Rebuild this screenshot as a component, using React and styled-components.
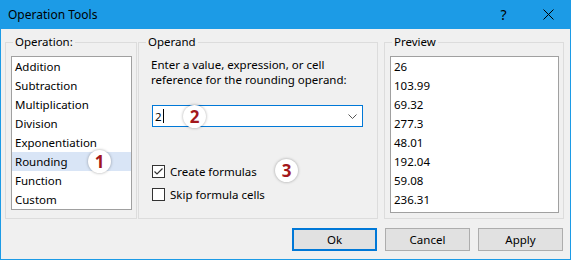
import React from 'react'
import styled, { createGlobalStyle } from 'styled-components'

const GlobalStyle = createGlobalStyle`
  html, body {
    margin: 0;
    padding: 0;
    background: #f0f0f0;
  }
  body {
    font-family: "Segoe UI", "Noto Sans", sans-serif;
    font-size: 11.5px;
    color: #000000;
  }
`

const Window = styled.div`
  width: 571px;
  height: 260px;
  box-sizing: border-box;
  border: 1px solid #1c9be6;
  border-top: none;
  background: #f0f0f0;
  display: flex;
  flex-direction: column;
`

const TitleBar = styled.div`
  height: 29px;
  flex-shrink: 0;
  background: #1c9be6;
  display: flex;
  align-items: center;
  padding-left: 8px;
  margin: 0 -1px;
  font-size: 12px;
`

const Title = styled.div`
  flex-grow: 1;
  line-height: 16px;
`

const TitleButton = styled.div`
  width: 45px;
  height: 29px;
  display: flex;
  align-items: center;
  justify-content: center;
  font-size: 14px;
`

const Body = styled.div`
  display: grid;
  grid-template-columns: 132px 240px 180px;
  grid-template-rows: 185px;
  column-gap: 1px;
  padding: 5px 7px 0 4px;
`

const Group = styled.fieldset`
  margin: 0;
  margin-left: ${p => p.$shift || 0}px;
  min-width: 0;
  border: 1px solid #dcdcdc;
  padding: 0 4px 0 5px;
  box-sizing: border-box;
  width: ${p => p.$width}px;
`

const Legend = styled.legend`
  padding: 0 2px;
  margin-left: 2px;
  line-height: 16px;
`

const ListBox = styled.div`
  margin-top: 6px;
  height: ${p => p.$height}px;
  box-sizing: border-box;
  border: 1px solid #a0a0a0;
  background: #ffffff;
`

const Row = styled.div`
  position: relative;
  height: 19px;
  line-height: 19px;
  padding-left: 3px;
  background: ${p => (p.$selected ? '#d9e5f6' : 'transparent')};
`

const Badge = styled.div`
  position: absolute;
  left: ${p => p.$left}px;
  top: ${p => p.$top}px;
  width: 23px;
  height: 23px;
  border-radius: 50%;
  background: #ffffff;
  box-shadow: 0 0 3px rgba(0, 0, 0, 0.35);
  color: #a3171b;
  font-family: "Open Sans", "Noto Sans", sans-serif;
  font-weight: 700;
  font-size: 17px;
  line-height: 23px;
  text-align: center;
`

const Prompt = styled.p`
  margin: 7px 0 0 7px;
  line-height: 15px;
`

const Combo = styled.div`
  position: relative;
  margin: 18px 0 0 8px;
  width: 211px;
  height: 22px;
  box-sizing: border-box;
  border: 1px solid #0078d7;
  background: #ffffff;
  display: flex;
  align-items: center;
  padding-left: 2px;
`

const Caret = styled.span`
  display: inline-block;
  width: 1px;
  height: 14px;
  background: #000000;
  margin-left: 1px;
`

const Chevron = styled.svg`
  position: absolute;
  right: 5px;
  top: 8px;
`

const Checks = styled.div`
  margin: 35px 0 0 8px;
  display: flex;
  flex-direction: column;
  gap: 4px;
`

const CheckRow = styled.label`
  position: relative;
  display: flex;
  align-items: center;
  height: 19px;
  gap: 5px;
`

const Box = styled.span`
  width: 13px;
  height: 13px;
  box-sizing: border-box;
  border: 1px solid #333333;
  background: #ffffff;
  display: flex;
  align-items: center;
  justify-content: center;
`

const Footer = styled.div`
  display: flex;
  justify-content: flex-end;
  gap: 8px;
  padding: 9px 7px 0 0;
`

const Button = styled.div`
  width: 85px;
  height: 23px;
  box-sizing: border-box;
  border: ${p => (p.$default ? '2px solid #0078d7' : '1px solid #adadad')};
  background: #e1e1e1;
  display: flex;
  align-items: center;
  justify-content: center;
`

const operations = ['Addition', 'Subtraction', 'Multiplication', 'Division', 'Exponentiation', 'Rounding', 'Function', 'Custom']
const preview = ['26', '103.99', '69.32', '277.3', '48.01', '192.04', '59.08', '236.31']

const Check = ({ checked, children }) => (
  <CheckRow>
    <Box>
      {checked && (
        <svg width="11" height="11" viewBox="0 0 11 11">
          <polyline points="1.5,5.5 4,8 9.5,2.5" fill="none" stroke="#333" strokeWidth="1.2" />
        </svg>
      )}
    </Box>
    {children}
  </CheckRow>
)

const App = () => (
  <Window>
    <GlobalStyle />
    <TitleBar>
      <Title>Operation Tools</Title>
      <TitleButton>?</TitleButton>
      <TitleButton>
        <svg width="11" height="11" viewBox="0 0 11 11">
          <path d="M0.5 0.5 L10.5 10.5 M10.5 0.5 L0.5 10.5" stroke="#000" strokeWidth="1" />
        </svg>
      </TitleButton>
    </TitleBar>
    <Body>
      <Group $width={132}>
        <Legend>Operation:</Legend>
        <ListBox $height={154}>
          {operations.map(op => (
            <Row key={op} $selected={op === 'Rounding'}>
              {op}
              {op === 'Rounding' && <Badge $left={76} $top={-2}>1</Badge>}
            </Row>
          ))}
        </ListBox>
      </Group>
      <Group $width={240}>
        <Legend>Operand</Legend>
        <Prompt>
          Enter a value, expression, or cell
          <br />
          reference for the rounding operand:
        </Prompt>
        <Combo>
          2<Caret />
          <Badge $left={30} $top={-1}>2</Badge>
          <Chevron width="9" height="5" viewBox="0 0 9 5">
            <polyline points="0.5,0.5 4.5,4.5 8.5,0.5" fill="none" stroke="#555" strokeWidth="1" />
          </Chevron>
        </Combo>
        <Checks>
          <Check checked>
            Create formulas
            <Badge $left={123} $top={-3}>3</Badge>
          </Check>
          <Check>Skip formula cells</Check>
        </Checks>
      </Group>
      <Group $width={180} $shift={5}>
        <Legend>Preview</Legend>
        <ListBox $height={157}>
          {preview.map(v => (
            <Row key={v}>{v}</Row>
          ))}
        </ListBox>
      </Group>
    </Body>
    <Footer>
      <Button $default>Ok</Button>
      <Button>Cancel</Button>
      <Button>Apply</Button>
    </Footer>
  </Window>
)

export default App
